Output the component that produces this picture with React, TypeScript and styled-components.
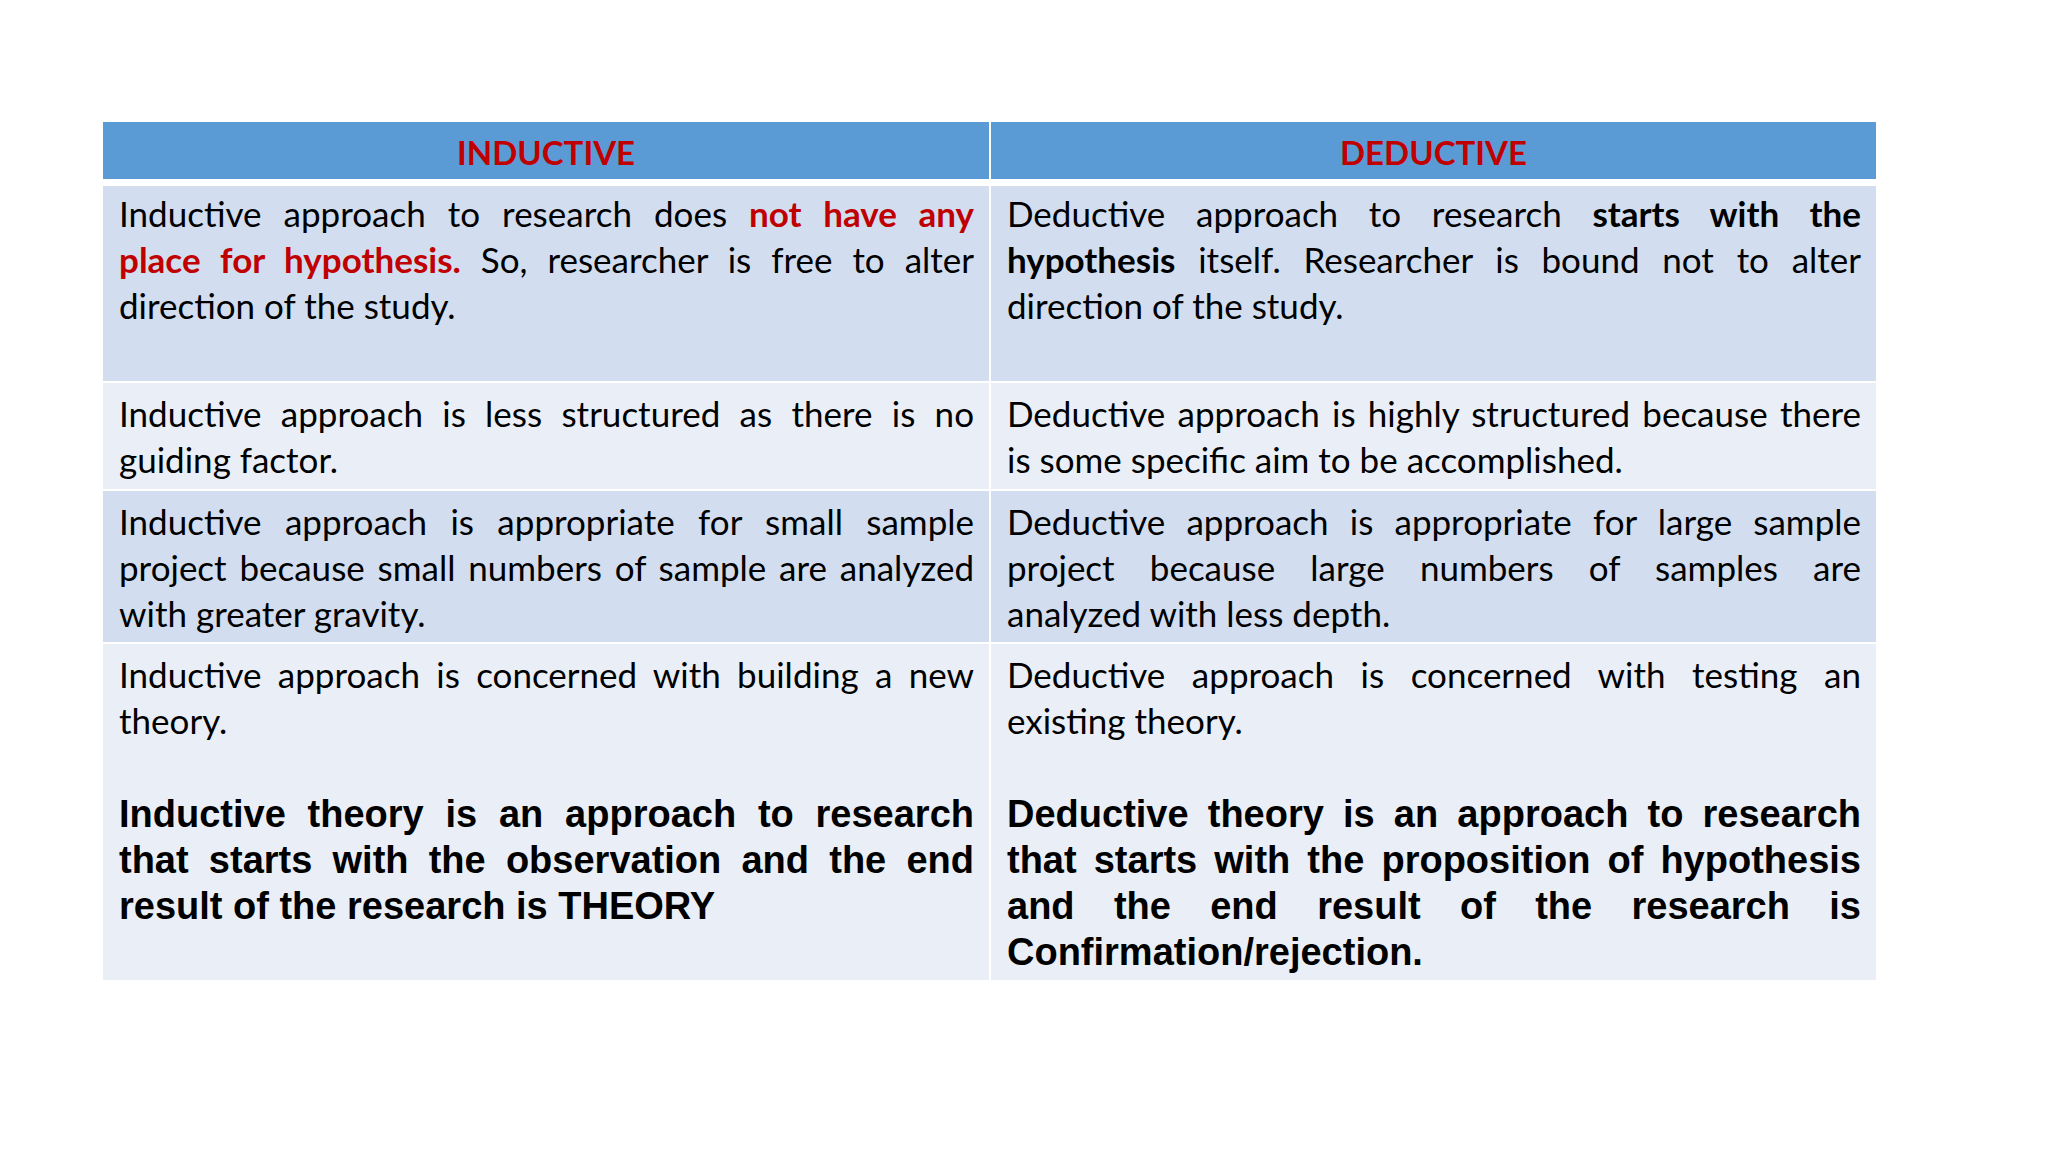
import styled, { createGlobalStyle } from 'styled-components';
import type { ReactNode } from 'react';

// 본문 글꼴 (Calibri 대신)
const BODY_FONT = `Lato, 'Open Sans', 'Noto Sans', sans-serif`;
const THEORY_FONT = `'Liberation Sans', Arial, sans-serif`;

const GlobalStyle = createGlobalStyle`
    html, body {
        margin: 0;
        padding: 0;
        background: #ffffff;
    }
`;

type Shade = 'dark' | 'light';

interface RowData {
    shade: Shade;
    height: number;
    padTop: number;
    left: ReactNode;
    right: ReactNode;
}

const Slide = styled.div`
    width: 2048px;
    height: 1152px;
    box-sizing: border-box;
    padding: 122px 0 0 103px;
    background: #ffffff;
    overflow: hidden;
`;

const Table = styled.div`
    display: grid;
    grid-template-columns: 886px 885px;
    column-gap: 2px;
    row-gap: 2px;
`;

const HeadCell = styled.div`
    height: 57px;
    margin-bottom: 5px;
    padding-top: 2px;
    box-sizing: border-box;
    display: flex;
    align-items: center;
    justify-content: center;
    background: #5b9bd5;
    color: #c00000;
    font-family: ${BODY_FONT};
    font-weight: 700;
    font-size: 33px;
`;

// 한 행 = 두 칸
const Row = styled.div`
    display: contents;
`;

const Cell = styled.div<{ $shade: Shade; $height: number; $padTop: number }>`
    height: ${(p) => p.$height}px;
    box-sizing: border-box;
    padding: ${(p) => p.$padTop}px 15px 0 16px;
    background: ${(p) => (p.$shade === 'dark' ? '#d2deef' : '#eaeff7')};
    color: #000000;
    font-family: ${BODY_FONT};
    font-size: 35px;
    line-height: 46px;
`;

const Line = styled.div<{ $last?: boolean }>`
    text-align: justify;
    text-align-last: ${(p) => (p.$last ? 'left' : 'justify')};
`;

const RedBold = styled.span`
    color: #c00000;
    font-weight: 700;
`;

const Bold = styled.span`
    font-weight: 700;
`;

const TheoryBlock = styled.div`
    margin-top: 48px;
    font-family: ${THEORY_FONT};
    font-weight: 700;
    font-size: 38px;
    line-height: 46px;
`;

// 줄 단위로 양쪽 정렬
const Para = ({ lines }: { lines: ReactNode[] }) => (
    <>
        {lines.map((line, i) => (
            <Line key={i} $last={i === lines.length - 1}>
                {line}
            </Line>
        ))}
    </>
);

const Theory = ({ lines }: { lines: string[] }) => (
    <TheoryBlock>
        <Para lines={lines} />
    </TheoryBlock>
);

const getRows = (): RowData[] => [
    {
        shade: 'dark',
        height: 195,
        padTop: 4,
        left: (
            <Para
                lines={[
                    <>
                        Inductive approach to research does <RedBold>not have any</RedBold>
                    </>,
                    <>
                        <RedBold>place for hypothesis.</RedBold> So, researcher is free to alter
                    </>,
                    'direction of the study.',
                ]}
            />
        ),
        right: (
            <Para
                lines={[
                    <>
                        Deductive approach to research <Bold>starts with the</Bold>
                    </>,
                    <>
                        <Bold>hypothesis</Bold> itself. Researcher is bound not to alter
                    </>,
                    'direction of the study.',
                ]}
            />
        ),
    },
    {
        shade: 'light',
        height: 106,
        padTop: 7,
        left: (
            <Para
                lines={[
                    'Inductive approach is less structured as there is no',
                    'guiding factor.',
                ]}
            />
        ),
        right: (
            <Para
                lines={[
                    'Deductive approach is highly structured because there',
                    'is some specific aim to be accomplished.',
                ]}
            />
        ),
    },
    {
        shade: 'dark',
        height: 151,
        padTop: 7,
        left: (
            <Para
                lines={[
                    'Inductive approach is appropriate for small sample',
                    'project because small numbers of sample are analyzed',
                    'with greater gravity.',
                ]}
            />
        ),
        right: (
            <Para
                lines={[
                    'Deductive approach is appropriate for large sample',
                    'project because large numbers of samples are',
                    'analyzed with less depth.',
                ]}
            />
        ),
    },
    {
        shade: 'light',
        height: 336,
        padTop: 7,
        left: (
            <>
                <Para
                    lines={[
                        'Inductive approach is concerned with building a new',
                        'theory.',
                    ]}
                />
                <Theory
                    lines={[
                        'Inductive theory is an approach to research',
                        'that starts with the observation and the end',
                        'result of the research is THEORY',
                    ]}
                />
            </>
        ),
        right: (
            <>
                <Para
                    lines={[
                        'Deductive approach is concerned with testing an',
                        'existing theory.',
                    ]}
                />
                <Theory
                    lines={[
                        'Deductive theory is an approach to research',
                        'that starts with the proposition of hypothesis',
                        'and the end result of the research is',
                        'Confirmation/rejection.',
                    ]}
                />
            </>
        ),
    },
];

const App = () => {
    const rows = getRows();

    return (
        <>
            <GlobalStyle />
            <Slide>
                <Table>
                    <HeadCell>INDUCTIVE</HeadCell>
                    <HeadCell>DEDUCTIVE</HeadCell>
                    {rows.map((row, i) => (
                        <Row key={i}>
                            <Cell $shade={row.shade} $height={row.height} $padTop={row.padTop}>
                                {row.left}
                            </Cell>
                            <Cell $shade={row.shade} $height={row.height} $padTop={row.padTop}>
                                {row.right}
                            </Cell>
                        </Row>
                    ))}
                </Table>
            </Slide>
        </>
    );
};

export default App;
